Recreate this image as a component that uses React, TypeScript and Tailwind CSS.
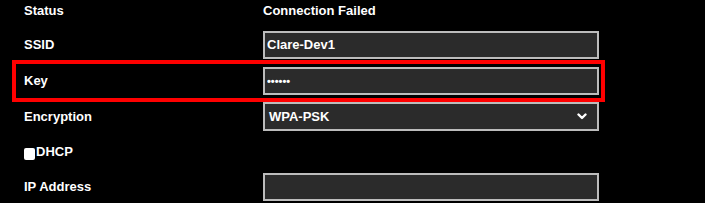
import React from "react";

const font = { fontFamily: '"Liberation Sans", Arial, sans-serif' };

function Field({ children }: { children?: React.ReactNode }) {
  return (
    <div className="w-[336px] h-[28px] bg-[#2b2b2b] border-2 border-[#bcbcbc] flex items-center px-[2px] text-white text-[13px] font-bold">
      {children}
    </div>
  );
}

export default function App() {
  return (
    <div className="w-[705px] h-[203px] bg-black overflow-hidden text-white text-[13px] font-bold" style={font}>
      <div className="pl-[24px] flex flex-col">
        {/* Status */}
        <div className="flex items-center h-[22px]">
          <div className="w-[239px]">Status</div>
          <div>Connection Failed</div>
        </div>

        {/* SSID */}
        <div className="flex items-center mt-[9px]">
          <div className="w-[239px]">SSID</div>
          <Field>Clare-Dev1</Field>
        </div>

        {/* Key - highlighted */}
        <div className="flex items-center mt-[1px] -ml-[12px] w-[593px] border-4 border-[#ff0000] pl-[8px] pr-[2px] py-[3px]">
          <div className="w-[239px]">Key</div>
          <Field>
            <input
              type="password"
              readOnly
              value="abcdef"
              className="bg-transparent outline-none text-white text-[11px] w-full font-bold"
              style={font}
            />
          </Field>
        </div>

        {/* Encryption */}
        <div className="flex items-center">
          <div className="w-[239px]">Encryption</div>
          <div className="w-[336px] h-[29px] bg-[#2b2b2b] border-2 border-[#bcbcbc] flex items-center justify-between pl-[4px] pr-[10px]">
            <span>WPA-PSK</span>
            <svg width="10" height="7" viewBox="0 0 10 7">
              <path d="M1.5 1.5 L5 5 L8.5 1.5" fill="none" stroke="white" strokeWidth="2.4" strokeLinecap="round" strokeLinejoin="round" />
            </svg>
          </div>
        </div>

        {/* DHCP */}
        <div className="flex items-center h-[42px]">
          <span className="w-[11px] h-[12px] bg-white rounded-[2px] mt-[3px]"></span>
          <span className="ml-[1px]">DHCP</span>
        </div>

        {/* IP Address */}
        <div className="flex items-center">
          <div className="w-[239px]">IP Address</div>
          <Field />
        </div>
      </div>
    </div>
  );
}
